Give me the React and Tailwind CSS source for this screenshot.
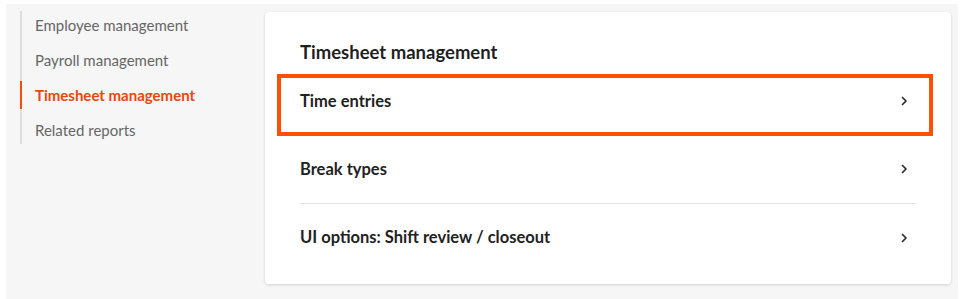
import React from 'react';

const NAV = [
  { label: 'Employee management' },
  { label: 'Payroll management' },
  { label: 'Timesheet management', active: true },
  { label: 'Related reports' },
];

const ROWS = ['Time entries', 'Break types', 'UI options: Shift review / closeout'];

function Chevron() {
  return (
    <svg width="8" height="12" viewBox="0 0 8 12" fill="none" className="shrink-0">
      <path d="M2.5 2.5l3.5 3.5-3.5 3.5" stroke="#2b2b2b" strokeWidth="1.7" strokeLinecap="round" strokeLinejoin="round" />
    </svg>
  );
}

export default function App() {
  return (
    <div className="w-[966px] h-[299px] bg-white pt-[4px] pl-[6px] pr-[8px]" style={{ fontFamily: 'Lato, "Noto Sans", sans-serif' }}>
      <div className="relative flex h-[295px] bg-[#f6f6f6]">
        <nav className="w-[259px] shrink-0 pt-[7px] pl-[14px]">
          <ul className="flex flex-col gap-[7px] border-l-2 border-[#dedede]">
            {NAV.map((item) => (
              <li
                key={item.label}
                className={
                  item.active
                    ? '-ml-[2px] border-l-2 border-[#f04e0b] pl-[13px] h-[28px] flex items-center text-[15px] font-bold text-[#e8470f]'
                    : 'pl-[13px] h-[28px] flex items-center text-[15px] text-[#666666]'
                }
              >
                {item.label}
              </li>
            ))}
          </ul>
        </nav>

        <section className="mt-[8px] w-[686px] h-[272px] bg-white rounded-[4px] shadow-[0_1px_3px_rgba(0,0,0,0.15)] px-[35px] pt-[26px]">
          <h2 className="text-[18.5px] font-bold text-[#1f1f1f] leading-[28px] mb-px">Timesheet management</h2>
          <ul>
            {ROWS.map((row, i) => (
              <li
                key={row}
                className={
                  'h-[68px] flex items-center justify-between pr-[8px] text-[16.5px] font-bold text-[#222222]' +
                  (i > 1 ? ' border-t border-[#e4e4e4]' : '')
                }
              >
                <span>{row}</span>
                <Chevron />
              </li>
            ))}
          </ul>
        </section>

        <div className="absolute left-[271px] top-[70px] w-[656px] h-[62px] border-4 border-[#ff4f00] pointer-events-none" />
      </div>
    </div>
  );
}
